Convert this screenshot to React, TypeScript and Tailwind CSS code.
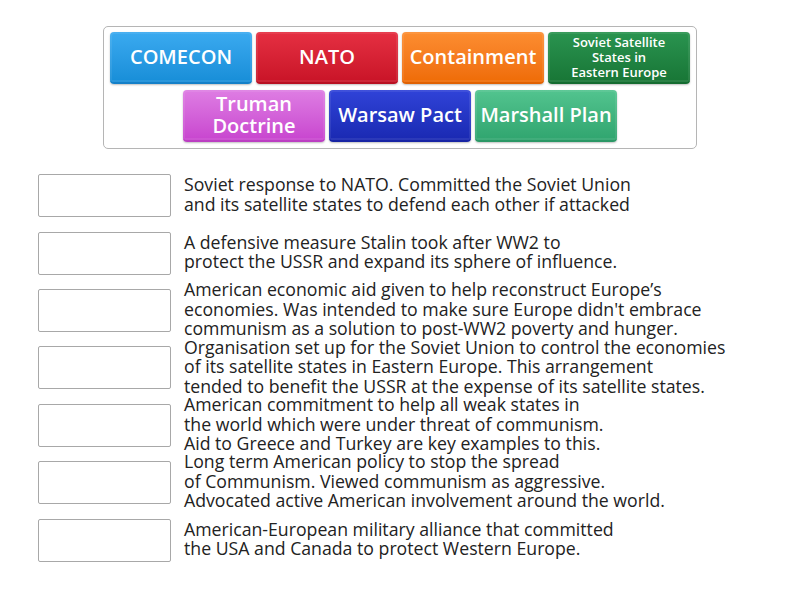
import React from "react";

const tiles1 = [
  { t: "COMECON", c: "bg-gradient-to-b from-[#3aaaf0] to-[#178ed8] border-[#1580c8]" },
  { t: "NATO", c: "bg-gradient-to-b from-[#e52f42] to-[#c91327] border-[#b81022]" },
  { t: "Containment", c: "bg-gradient-to-b from-[#fc8d30] to-[#ef6c05] border-[#e06204]" },
  { t: "Soviet Satellite\nStates in\nEastern Europe", c: "bg-gradient-to-b from-[#2a9450] to-[#187636] border-[#156c31]", small: true },
];
const tiles2 = [
  { t: "Truman Doctrine", c: "bg-gradient-to-b from-[#de7de3] to-[#c845cf] border-[#bb3ec2]" },
  { t: "Warsaw Pact", c: "bg-gradient-to-b from-[#3043d8] to-[#1a29b2] border-[#1724a4]" },
  { t: "Marshall Plan", c: "bg-gradient-to-b from-[#52c48f] to-[#30a56f] border-[#2b9866]" },
];

const rows = [
  "Soviet response to NATO. Committed the Soviet Union\nand its satellite states to defend each other if attacked",
  "A defensive measure Stalin took after WW2 to\nprotect the USSR and expand its sphere of influence.",
  "American economic aid given to help reconstruct Europe’s\neconomies. Was intended to make sure Europe didn't embrace\ncommunism as a solution to post-WW2 poverty and hunger.",
  "Organisation set up for the Soviet Union to control the economies\nof its satellite states in Eastern Europe. This arrangement\ntended to benefit the USSR at the expense of its satellite states.",
  "American commitment to help all weak states in\nthe world which were under threat of communism.\nAid to Greece and Turkey are key examples to this.",
  "Long term American policy to stop the spread\nof Communism. Viewed communism as aggressive.\nAdvocated active American involvement around the world.",
  "American-European military alliance that committed\nthe USA and Canada to protect Western Europe.",
];

function Tile({ t, c, small }: { t: string; c: string; small?: boolean }) {
  return (
    <div
      className={`w-[142px] h-[52px] rounded-[4px] border-b-2 ${c} flex items-center justify-center text-center text-white shadow-[inset_0_0_0_2px_rgba(255,255,255,0.08),0_1px_2px_rgba(0,0,0,0.25)]`}
    >
      {small ? (
        <span className="text-[13px] leading-[15px] font-semibold whitespace-pre">{t}</span>
      ) : (
        <span className="text-[20px] leading-[22px] font-semibold">{t}</span>
      )}
    </div>
  );
}

export default function App() {
  return (
    <div className="w-[800px] h-[600px] bg-white" style={{ fontFamily: '"Open Sans", sans-serif' }}>
      <div className="pt-[26px] pl-[103px]">
        <div className="w-[594px] h-[123px] border border-[#b5b5b5] rounded-[5px] flex flex-col items-center pt-[5px] gap-[6px]">
          <div className="flex gap-[4px]">
            {tiles1.map((x) => (
              <Tile key={x.t} {...x} />
            ))}
          </div>
          <div className="flex gap-[4px]">
            {tiles2.map((x) => (
              <Tile key={x.t} {...x} />
            ))}
          </div>
        </div>
      </div>
      <div className="pl-[38px] pt-[18px] flex flex-col">
        {rows.map((r, i) => (
          <div key={i} className="h-[57.4px] flex items-center">
            <div className="w-[133px] h-[43px] border border-[#a8a8a8] rounded-[2px] bg-white shrink-0" />
            <div className="ml-[13px] mb-[2px] text-[17.7px] leading-[19.5px] text-[#222] whitespace-pre">{r}</div>
          </div>
        ))}
      </div>
    </div>
  );
}
